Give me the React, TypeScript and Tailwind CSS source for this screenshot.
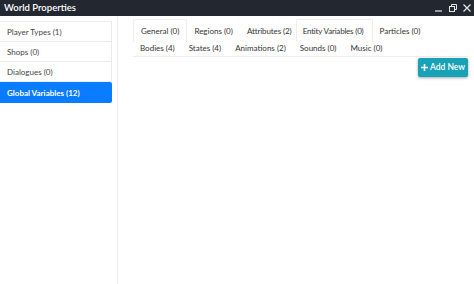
import { useState } from "react";

const sideItems = ["Player Types (1)", "Shops (0)", "Dialogues (0)", "Global Variables (12)"];
const tabRow1 = ["General (0)", "Regions (0)", "Attributes (2)", "Entity Variables (0)", "Particles (0)"];
const tabRow2 = ["Bodies (4)", "States (4)", "Animations (2)", "Sounds (0)", "Music (0)"];

export default function App() {
  const [active] = useState(3);
  return (
    <div className="w-[474px] h-[284px] bg-white flex flex-col overflow-hidden" style={{ fontFamily: "Lato, 'Noto Sans', sans-serif" }}>
      <div className="h-[16px] bg-[#222730] flex items-center justify-between pl-[4px] pr-[3px]">
        <span className="text-white text-[9.5px] font-semibold leading-none">World Properties</span>
        <div className="flex items-center gap-[6px] text-[#e6e6e6]">
          <svg width="8" height="8" viewBox="0 0 8 8"><path d="M0 7h7" stroke="currentColor" strokeWidth="1.2" /></svg>
          <svg width="8" height="8" viewBox="0 0 8 8" fill="none" stroke="currentColor" strokeWidth="1"><rect x="0.5" y="2.5" width="5" height="5" /><path d="M2.5 2.5V0.5h5v5h-2" /></svg>
          <svg width="8" height="8" viewBox="0 0 8 8" stroke="currentColor" strokeWidth="1.2"><path d="M0.5 0.5l7 7M7.5 0.5l-7 7" /></svg>
        </div>
      </div>
      <div className="flex flex-1">
        <div className="w-[118px] border-r border-[#ececec] pt-[5px] pr-[5px]">
          {sideItems.map((s, i) => (
            <div
              key={s}
              className={
                i === active
                  ? "h-[21px] flex items-center pl-[7px] text-[8px] text-white font-bold bg-[#0a7cff] rounded-r-[2px]"
                  : "h-[21px] flex items-center pl-[7px] text-[8px] text-[#444] bg-white border border-[#ececec] border-l-0 -mt-px first:mt-0"
              }
            >
              {s}
            </div>
          ))}
        </div>
        <div className="flex-1 pl-[15px] pr-[6px] pt-[3px]">
          <div className="border-b border-[#eeeeee] pb-[2px]">
            <div className="flex h-[23px] items-center">
              {tabRow1.map((t, i) => (
                <div
                  key={t}
                  className={
                    "h-full flex items-center text-[8px] text-[#333] " +
                    (i === 0
                      ? "px-[7px] border border-[#eeeeee] border-b-0 rounded-t-[2px]"
                      : i === 3
                        ? "pl-[6px] pr-[8px] tracking-[-0.2px] border border-[#eeeeee] border-b-0 rounded-t-[2px]"
                        : i === 2
                          ? "pl-[7px] pr-[4px] tracking-[-0.1px]"
                          : "px-[7px]")
                  }
                >
                  {t}
                </div>
              ))}
            </div>
            <div className="flex h-[12px] items-center">
              {tabRow2.map((t) => (
                <div key={t} className="px-[7px] text-[8px] text-[#333]">
                  {t}
                </div>
              ))}
            </div>
          </div>
          <div className="flex justify-end pt-[1px]">
            <button className="h-[19px] w-[50px] justify-center bg-[#17a2b8] text-white text-[8.5px] font-semibold rounded-[2px] flex items-center gap-[2px] shadow-[0_1px_3px_rgba(0,0,0,0.35)]">
              <svg width="7" height="7" viewBox="0 0 7 7"><path d="M3.5 0v7M0 3.5h7" stroke="white" strokeWidth="1.6" /></svg>
              Add New
            </button>
          </div>
        </div>
      </div>
    </div>
  );
}
